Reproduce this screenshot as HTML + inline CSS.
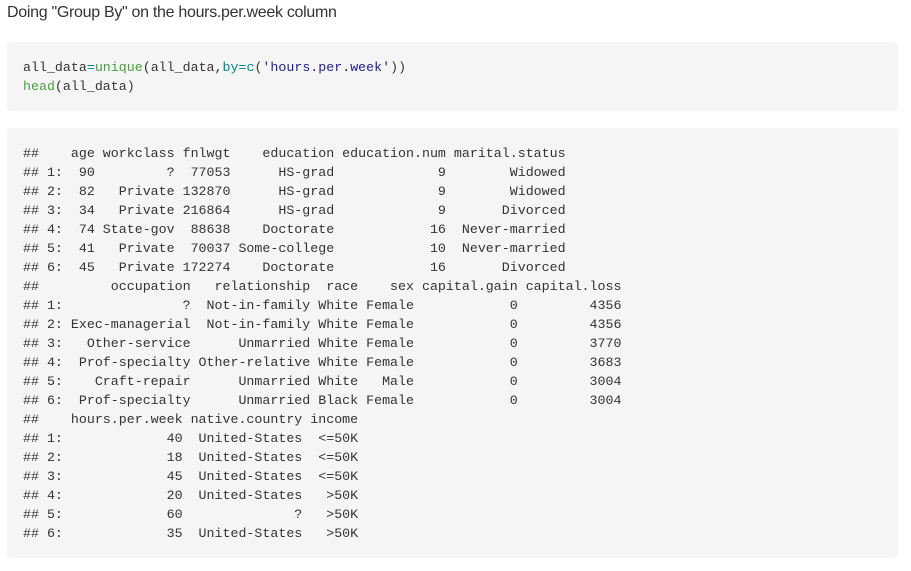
<!DOCTYPE html>
<html><head><meta charset="utf-8"><style>
html,body{margin:0;padding:0;background:#fff;width:911px;height:571px;overflow:hidden}
.t{position:absolute;left:7px;top:4px;font-family:"Liberation Sans",Arial,sans-serif;font-size:16px;color:#333;letter-spacing:-0.3px}
pre{position:absolute;left:7px;width:860px;margin:0;background:#f5f5f5;border-radius:4px;padding:16px 15px 15px 16px;font-family:"Liberation Mono",monospace;font-size:13.3px;line-height:19px;color:#333;white-space:pre}
.f{color:#4a9d3f}.k{color:#00868b}.s{color:#20208f}
</style></head><body>
<div class="t">Doing "Group By" on the hours.per.week column</div>
<pre style="top:42px;height:38px">all_data<span class="k">=</span><span class="f">unique</span>(all_data,<span class="k">by=c</span>(<span class="s">'hours.per.week'</span>))
<span class="f">head</span>(all_data)</pre>
<pre style="top:128px;height:399px">##    age workclass fnlwgt    education education.num marital.status
## 1:  90         ?  77053      HS-grad             9        Widowed
## 2:  82   Private 132870      HS-grad             9        Widowed
## 3:  34   Private 216864      HS-grad             9       Divorced
## 4:  74 State-gov  88638    Doctorate            16  Never-married
## 5:  41   Private  70037 Some-college            10  Never-married
## 6:  45   Private 172274    Doctorate            16       Divorced
##         occupation   relationship  race    sex capital.gain capital.loss
## 1:               ?  Not-in-family White Female            0         4356
## 2: Exec-managerial  Not-in-family White Female            0         4356
## 3:   Other-service      Unmarried White Female            0         3770
## 4:  Prof-specialty Other-relative White Female            0         3683
## 5:    Craft-repair      Unmarried White   Male            0         3004
## 6:  Prof-specialty      Unmarried Black Female            0         3004
##    hours.per.week native.country income
## 1:             40  United-States  &lt;=50K
## 2:             18  United-States  &lt;=50K
## 3:             45  United-States  &lt;=50K
## 4:             20  United-States   &gt;50K
## 5:             60              ?   &gt;50K
## 6:             35  United-States   &gt;50K</pre>
</body></html>
